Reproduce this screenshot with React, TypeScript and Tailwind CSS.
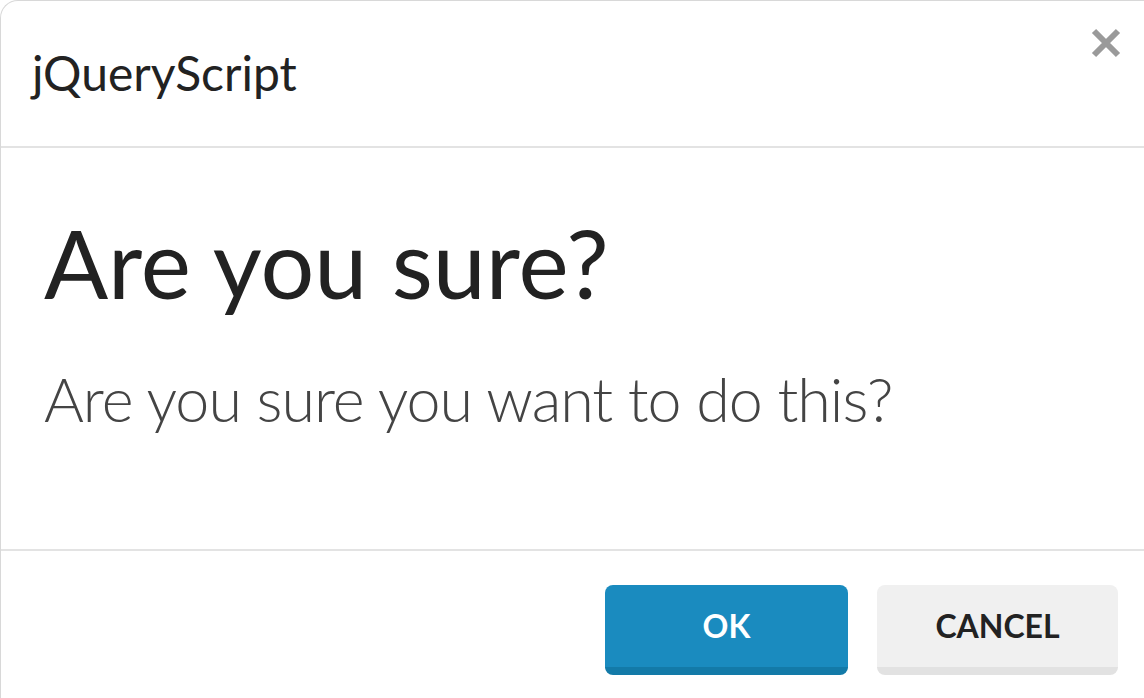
import React from 'react'

export default function App(): React.ReactElement {
  return (
    <div className="w-[1144px] h-[698px] bg-white overflow-hidden" style={{ fontFamily: 'Lato, "Open Sans", sans-serif' }}>
      <div className="h-full flex flex-col rounded-tl-[18px] border-t border-l border-[#d8d8d8] bg-white">
        {/* Header */}
        <div className="h-[147px] flex items-start justify-between pl-[31px] pr-[22px] border-b-2 border-[#e3e3e3]">
          <h4 className="mt-[48px] text-[48px] leading-none text-[#222]">jQueryScript</h4>
          <button className="mt-[26px] text-[#9a9a9a]" aria-label="close">
            <svg width="32" height="32" viewBox="0 0 32 32">
              <path d="M4 4 L28 28 M28 4 L4 28" stroke="currentColor" strokeWidth="6" strokeLinecap="butt" />
            </svg>
          </button>
        </div>

        {/* Body */}
        <div className="h-[403px] pl-[43px] border-b-2 border-[#e3e3e3]">
          <h1 className="mt-[67px] text-[95px] leading-none text-[#222]">Are you sure?</h1>
          <p className="mt-[58px] text-[61px] leading-none font-light text-[#444] tracking-[-1px]">Are you sure you want to do this?</p>
        </div>

        {/* Footer */}
        <div className="flex-1 flex items-start justify-end gap-[29px] pr-[26px] pt-[34px]">
          <button className="w-[243px] h-[90px] rounded-[8px] bg-[#1a8bbf] border-b-[8px] border-[#137aa8] text-white text-[32px] font-bold">
            OK
          </button>
          <button className="w-[241px] h-[90px] rounded-[8px] bg-[#f0f0f0] border-b-[8px] border-[#e2e2e2] text-[#222] text-[32px] font-bold">
            CANCEL
          </button>
        </div>
      </div>
    </div>
  )
}
